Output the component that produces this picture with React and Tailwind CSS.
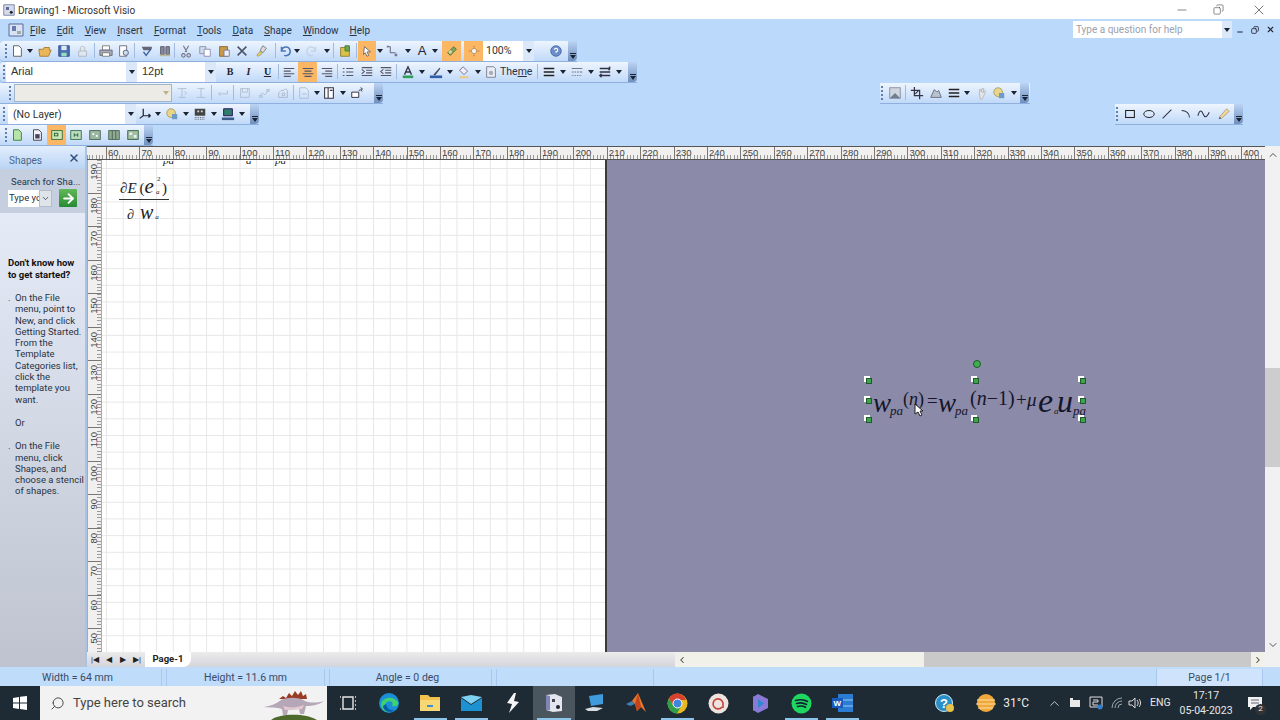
import { X, Search, ChevronUp, ChevronDown, ChevronLeft, ChevronRight, ArrowRight, Minus, Copy } from "lucide-react"

const ICONS = {
  new: <path d="M4 2h6l3 3v9H4z" fill="#fff" stroke="#555" />,
  open: <path d="M1 6h5l1-2h6v3h2l-3 7H2z" fill="#e9b65a" stroke="#a9772c" />,
  save: <><path d="M2 2h12v12H2z" fill="#4a6fb5" stroke="#2b4a88" /><path d="M5 2h6v5H5z" fill="#dfe8f5" /><path d="M5 10h6v4H5z" fill="#9db" /></>,
  perm: <path d="M3 8h9v6H3zM5 8V4a3 3 0 0 1 5 0v4" fill="#e8e8e8" stroke="#999" />,
  print: <><path d="M4 2h8v5H4z" fill="#fff" stroke="#777" /><path d="M1 7h14v6H1z" fill="#aab" stroke="#667" /><path d="M4 10h8v4H4z" fill="#fff" stroke="#777" /></>,
  preview: <><path d="M3 2h8v12H3z" fill="#fff" stroke="#667" /><circle cx="10" cy="10" r="3" fill="#cde" stroke="#557" /></>,
  spell: <><path d="M2 3h12l-2 4H4z" fill="#667" /><path d="M4 9l3 4 6-8" fill="none" stroke="#3a5f9c" strokeWidth="1.6" /></>,
  research: <><path d="M3 3h4v9H3zM9 3h4v9H9z" fill="#889" stroke="#556" /><path d="M2 12h12v2H2z" fill="#bb9" /></>,
  cut: <path d="M5 2l4 7M11 2L7 9M5 11a2 2 0 1 0 .1 0zM11 11a2 2 0 1 0 .1 0z" fill="none" stroke="#778" strokeWidth="1.3" />,
  copy: <><path d="M2 3h7v8H2z" fill="#cde" stroke="#88a" /><path d="M7 6h7v8H7z" fill="#fff" stroke="#88a" /></>,
  paste: <><path d="M3 3h9v11H3z" fill="#c99a4a" stroke="#86622a" /><path d="M8 7h6v7H8z" fill="#eef" stroke="#778" /></>,
  del: <path d="M3 3l10 10M13 3L3 13" stroke="#4a5568" strokeWidth="1.8" />,
  paint: <><path d="M9 2l4 3-4 5-3-3z" fill="#dcdcdc" stroke="#777" /><path d="M6 8l2 3-4 3-2-1z" fill="#e8cf4a" stroke="#a98" /></>,
  undo: <path d="M4 3v5h5M4 8a5 5 0 1 1 3 5" fill="none" stroke="#4b76b5" strokeWidth="1.8" />,
  redo: <path d="M12 3v5H7M12 8a5 5 0 1 0-3 5" fill="none" stroke="#b9c6d6" strokeWidth="1.6" />,
  shapes: <><path d="M3 4h10v10H3z" fill="#d9c24a" stroke="#8a7a2a" /><path d="M8 2h5v6H8z" fill="#6aa84f" stroke="#47763a" /></>,
  pointer: <path d="M5 3l7 6H8l2 4-2 1-2-4-2 2z" fill="#fff" stroke="#666" />,
  conn: <><path d="M3 3h3v7h6" fill="none" stroke="#556" /><rect x="2" y="2" width="2" height="2" fill="#779" /><rect x="11" y="11" width="3" height="3" fill="#779" /></>,
  hl: <><path d="M3 10l7-7 3 3-7 7z" fill="#7fa55a" stroke="#4e6d38" /><circle cx="6" cy="9" r="2" fill="#d8d89a" /></>,
  gear: <><circle cx="8" cy="8" r="3" fill="#f4f4f4" stroke="#b98b5a" /><path d="M8 2v2M8 12v2M2 8h2M12 8h2" stroke="#a5754a" /></>,
  help: <><circle cx="8" cy="8" r="6" fill="#6d8fc9" stroke="#4566a6" /><path d="M6 6.5a2 2 0 1 1 2 2.5v1" fill="none" stroke="#fff" strokeWidth="1.3" /></>,
  alignL: <path d="M2 4h12M2 7h8M2 10h12M2 13h8" stroke="#556" strokeWidth="1.4" />,
  alignC: <path d="M2 4h12M4 7h8M2 10h12M4 13h8" stroke="#556" strokeWidth="1.4" />,
  alignR: <path d="M2 4h12M6 7h8M2 10h12M6 13h8" stroke="#556" strokeWidth="1.4" />,
  list: <path d="M2 4h2M6 4h8M2 8h2M6 8h8M2 12h2M6 12h8" stroke="#556" strokeWidth="1.3" />,
  indent: <path d="M2 3h12M7 6h7M7 9h7M2 12h12M2 5l3 2.5L2 10" fill="none" stroke="#556" strokeWidth="1.2" />,
  outdent: <path d="M2 3h12M7 6h7M7 9h7M2 12h12M5 5L2 7.5 5 10" fill="none" stroke="#556" strokeWidth="1.2" />,
  fontColor: <><path d="M4 11l4-9 4 9M6 8h4" fill="none" stroke="#334" strokeWidth="1.5" /><path d="M2 12h12v3H2z" fill="#2f9e57" /></>,
  lineColor: <><path d="M5 11l7-8 1 1-6 8z" fill="#445" /><path d="M1 12h14v3H1z" fill="#2f5ea8" /></>,
  fill: <><path d="M7 2l5 5-4 4-5-5z" fill="#eef" stroke="#667" /><path d="M3 13h10v2H3z" fill="#f2c46d" /></>,
  theme: <><path d="M3 2h8l2 2v10H3z" fill="#e9eef7" stroke="#778" /><circle cx="8" cy="9" r="2.5" fill="#aab" /></>,
  lines: <path d="M2 4h12M2 8h12M2 12h12" stroke="#222" strokeWidth="1.8" />,
  dash: <path d="M2 4h12M2 8h2M5 8h2M8 8h2M11 8h3M2 12h1M4 12h1M6 12h1M8 12h1M10 12h1M12 12h1" stroke="#667" />,
  arrows: <path d="M2 4h10l2-2M14 4l-2 2M2 8h12M2 12h12M4 10l-2 2 2 2" fill="none" stroke="#334" strokeWidth="1.5" />,
  t1: <path d="M3 3h10M8 3v10M4 13h8M11 6l2 2-2 2" fill="none" stroke="#aebccd" />,
  t2: <path d="M3 13h10M8 3v10M4 3h8" fill="none" stroke="#aebccd" />,
  ret: <path d="M13 5v4H3M3 9l2-2M3 9l2 2" fill="none" stroke="#aebccd" />,
  disk: <path d="M3 3h10v10H3zM5 3v4h6V3" fill="none" stroke="#aebccd" />,
  link: <path d="M3 11l3-3 3 2 4-5M3 11h3v2H3zM11 4h3v2h-3z" fill="none" stroke="#aebccd" />,
  grp: <path d="M3 13V8l3-3h3l2-2 2 2v8zM7 8h3v3H7z" fill="none" stroke="#a9b5c5" />,
  page: <path d="M3 2h7l3 3v9H3zM6 9h5" fill="none" stroke="#aebccd" />,
  book: <path d="M3 2h10v12H3zM7 2v12M9 5h3" fill="#fff" stroke="#334" strokeWidth="1.2" />,
  rot: <path d="M2 7h8v6H2zM10 5a3 3 0 0 1 4 1M12 2l2 1-1 2" fill="#fff" stroke="#334" strokeWidth="1.1" />,
  route: <path d="M6 2v8l-4 3M6 10h8M12 8l2 2-2 2" fill="none" stroke="#223" strokeWidth="1.4" />,
  ball: <><circle cx="7" cy="7" r="5" fill="#e6d58a" stroke="#a99b55" /><path d="M8 8h6v6H8z" fill="#6d9bc8" /></>,
  pattern: <><path d="M2 2h12v8H2z" fill="#444" /><path d="M2 12h12M2 14h12" stroke="#556" strokeDasharray="1 1" /><path d="M5 4h2v2H5zM9 4h2v2H9z" fill="#ddd" /></>,
  shadow: <><path d="M3 2h10v8H3z" fill="#2f7d6b" stroke="#205" /><path d="M1 12h14v3H1z" fill="#3b5b8a" /></>,
  gNew: <path d="M4 2h6l3 3v9H4z" fill="#b7e4a8" stroke="#2f7d3a" />,
  gBack: <><path d="M4 2h6l3 3v9H4z" fill="#f2f2f2" stroke="#334" /><rect x="6" y="7" width="5" height="5" fill="#446" /></>,
  gA: <><rect x="2" y="3" width="12" height="10" fill="#cfe8b8" stroke="#2d6a3a" /><rect x="5" y="6" width="4" height="3" fill="none" stroke="#1e5a2a" /></>,
  gB: <><rect x="2" y="3" width="12" height="10" fill="#bcdcbc" stroke="#2d6a4a" /><path d="M6 6v4M10 6v4M6 8h4" stroke="#1e5a3a" /></>,
  gC: <><rect x="2" y="3" width="12" height="10" fill="#9db8a0" stroke="#3f5f50" /><path d="M5 6h2v2H5zM9 8h2v2H9z" fill="#fff" /></>,
  gD: <><rect x="2" y="3" width="12" height="10" fill="#94ab90" stroke="#3f5f50" /><path d="M6 3v10M10 3v10" stroke="#3f5f50" /></>,
  gE: <><rect x="2" y="3" width="12" height="10" fill="#a2c0a0" stroke="#2f5f40" /><path d="M4 5h3v3H4zM9 8h3v3H9z" fill="#eef" /></>,
  picture: <><rect x="2" y="2" width="12" height="12" fill="#cfd6de" stroke="#889" /><path d="M2 14l6-6 6 6z" fill="#6f7f90" /></>,
  crop: <path d="M5 1v10h10M1 5h10v10M6 9l4-4" fill="none" stroke="#334" strokeWidth="1.4" />,
  contrast: <path d="M2 13l4-9 3 3 2-2 3 8z" fill="#b7c4cf" stroke="#667" />,
  hand: <path d="M5 8V4h2v3l1-4h2l-1 5 2-3 1 1-2 5-2 4H6z" fill="#e6e6e6" stroke="#b2b6bb" />,
  rect: <rect x="3" y="4" width="10" height="8" fill="none" stroke="#222" strokeWidth="1.2" />,
  oval: <ellipse cx="8" cy="8" rx="6" ry="4" fill="none" stroke="#222" strokeWidth="1.1" />,
  line: <path d="M3 13L13 3" stroke="#334" strokeWidth="1.2" />,
  arc: <path d="M3 4c5 0 9 3 9 8" fill="none" stroke="#334" strokeWidth="1.2" />,
  wave: <path d="M1 10c2-7 4-7 6-2s4 4 7-2" fill="none" stroke="#334" strokeWidth="1.2" />,
  pencil: <><path d="M3 11l8-9 3 3-9 8z" fill="#efd98a" stroke="#a99" /><path d="M3 11l-1 3 3-1z" fill="#556" /></>,
}

function Drop({ w = "w-[10px]" }) {
  return (
    <div className={`flex h-full shrink-0 items-center justify-center ${w}`}>
      <div className="h-0 w-0 border-x-[3.5px] border-t-[4px] border-x-transparent border-t-[#1b2433]" />
    </div>
  )
}

function Sep() {
  return <div className="mx-[1px] h-[15px] w-px shrink-0 bg-[#9fbbe0]" />
}

function Ic({ name, w = "w-[19px]", on, off, className = "" }) {
  return (
    <div className={`flex h-full shrink-0 items-center justify-center ${w} ${on ? "bg-[#fbb764]" : ""} ${off ? "opacity-60" : ""} ${className}`}>
      <svg width="14" height="14" viewBox="0 0 16 16">{ICONS[name]}</svg>
    </div>
  )
}

function Grip({ className = "" }) {
  return <div className={`h-[14px] w-[2px] shrink-0 border-l-2 border-dotted border-[#5f7fad] ${className}`} />
}

function EndHandle() {
  return (
    <div className="flex h-full w-[9px] shrink-0 flex-col items-center justify-end gap-[1px] rounded-br-sm bg-gradient-to-b from-[#bcd4f4] to-[#6f8fbd] pb-[2px]">
      <div className="h-px w-[6px] bg-[#1b2433]" />
      <div className="h-0 w-0 border-x-[3.5px] border-t-[4px] border-x-transparent border-t-[#1b2433]" />
    </div>
  )
}

function Bar({ className = "", children }) {
  return (
    <div className={`flex h-[20px] shrink-0 items-center bg-gradient-to-b from-[#eef5fe] to-[#c0d9f9] shadow-[0_1px_0_#8fb0dc] ${className}`}>
      {children}
    </div>
  )
}

function Combo({ text, w, drop = "w-[11px]", className = "" }) {
  return (
    <>
      <div className={`flex h-full shrink-0 items-center bg-white text-[10.5px] text-[#333] ${w} ${className}`}>{text}</div>
      <div className="h-full shrink-0 bg-[#dbe8fa]"><Drop w={drop} /></div>
    </>
  )
}

const MENUS = ["File", "Edit", "View", "Insert", "Format", "Tools", "Data", "Shape", "Window", "Help"]
const SIDE_1 = ["On the File", "menu, point to", "New, and click", "Getting Started.", "From the", "Template", "Categories list,", "click the", "template you", "want."]
const SIDE_2 = ["On the File", "menu, click", "Shapes, and", "choose a stencil", "of shapes."]
const H_RULER = Array.from({ length: 35 }, (_, i) => 60 + i * 10)
const V_RULER = Array.from({ length: 15 }, (_, i) => 190 - i * 10)

function Handle({ className }) {
  return (
    <div className={`absolute h-[6px] w-[6px] border border-[#1e5a2a] bg-[#3fa34d] shadow-[-2px_-2px_0_#fff] ${className}`} />
  )
}

function Formula() {
  return (
    <div className="absolute left-[873px] top-[375px] flex h-[40px] items-baseline whitespace-nowrap font-['Liberation_Serif',serif] text-[#15152b]">
      <i className="w-[17px] text-[27px] leading-[40px]">w</i>
      <i className="w-[12px] translate-y-[3px] text-[13px]">pa</i>
      <span className="ml-[1px] w-[24px] -translate-y-[7px] text-[18px]">(<i>n</i>)</span>
      <span className="w-[11px] -translate-y-[5px] text-[19px]">=</span>
      <i className="w-[17px] text-[27px]">w</i>
      <i className="w-[13px] translate-y-[3px] text-[13px]">pa</i>
      <span className="ml-[2px] w-[46px] -translate-y-[7px] text-[20px]">(<i>n</i>−1)</span>
      <span className="w-[11px] -translate-y-[6px] text-[19px]">+</span>
      <i className="w-[11px] -translate-y-[6px] text-[19px]">μ</i>
      <i className="w-[16px] text-[34px]">e</i>
      <i className="w-[3px] translate-y-[2px] text-[9px]">a</i>
      <i className="w-[16px] text-[32px]">u</i>
      <i className="translate-y-[3px] text-[13px]">pa</i>
    </div>
  )
}

function Stego() {
  return (
    <svg width="62" height="34" viewBox="0 0 62 34">
      <path d="M8 34c6-6 34-8 46 0z" fill="#4d6a2c" />
      <path d="M16 13l4-3 3 2 3-5 3 3 3-5 3 4 3-4 2 5 3-2 1 5z" fill="#9a3b25" />
      <path d="M1 21c6-1 12-3 17-7 7-3 18-3 24 1 5 2 12 2 19 0-5 4-12 5-18 5l-2 8h-4l-1-5-11 1-1 5h-4l-1-6c-5-2-12-1-18-2z" fill="#b5a6b8" />
      <path d="M20 20c6 2 14 2 21-1l-2 4-17 1z" fill="#e4c9cf" />
    </svg>
  )
}

const UNDERLINED = [2, 3, 5, 8, 11, 12]

function TaskIcon({ i }) {
  const art = [
    <svg key="0" width="18" height="18" viewBox="0 0 18 18"><path d="M4 3h10v12H4zM1 3h1M1 15h1M16 3h1M16 7h1M16 11h1M16 15h1" fill="none" stroke="#e7e7e7" strokeWidth="1.4" /></svg>,
    <svg key="1" width="22" height="22" viewBox="0 0 22 22"><circle cx="11" cy="11" r="10" fill="#1a8fd8" /><path d="M3 12C4 5 15 3 20 10c1 4-3 5-6 4 2-3-1-6-5-4-3 2-3 7 1 10-4 0-7-4-7-8z" fill="#3fd06f" /><path d="M5 14c0 5 7 8 12 4-5 1-8-1-9-6z" fill="#0b5ca8" /></svg>,
    <svg key="2" width="22" height="20" viewBox="0 0 22 20"><path d="M1 2h8l2 2h10v14H1z" fill="#f2c14e" /><path d="M1 7h20v11H1z" fill="#f8d775" /><path d="M8 12h6v2H8z" fill="#3a8fd1" /></svg>,
    <svg key="3" width="21" height="16" viewBox="0 0 21 16"><path d="M0 3l10 7 11-7v13H0z" fill="#1c92d2" /><path d="M0 2l10-2 11 2-11 7z" fill="#7fd0f2" /></svg>,
    <svg key="4" width="12" height="20" viewBox="0 0 12 20"><path d="M7 0L0 10l5 1-3 9 10-11-5-1 2-8z" fill="#f5f5f5" /></svg>,
    <svg key="5" width="21" height="20" viewBox="0 0 21 20"><path d="M3 2l9-1 7 3v14l-9 1-7-2z" fill="#e4e6ef" /><path d="M3 2l4 1v14l-4 0z" fill="#7d86b5" /><circle cx="15" cy="14" r="2" fill="#223" /><path d="M9 6h3v3H9z" fill="#445" /></svg>,
    <svg key="6" width="20" height="20" viewBox="0 0 20 20"><path d="M4 3l14-2v10L6 13z" fill="#3f9bdc" /><path d="M0 16l8-2 10 1-6 3H3z" fill="#d7dde2" /></svg>,
    <svg key="7" width="20" height="20" viewBox="0 0 20 20"><path d="M0 11l6-3 3 3-5 2z" fill="#3c7fb5" /><path d="M6 8l6-8 8 19-5-5-4 4-2-7z" fill="#e6782c" /><path d="M12 0l-3 11 2 7 4-4z" fill="#c4451d" /></svg>,
    <svg key="8" width="21" height="21" viewBox="0 0 21 21"><circle cx="10.5" cy="10.5" r="10" fill="#e8b923" /><path d="M10.5.5A10 10 0 0 0 2 5.5l5 8.5 3.500-7H19A10 10 0 0 0 10.500.5z" fill="#d9412f" /><path d="M2 5.500A10 10 0 0 0 10 20.500l4-7-7 .5z" fill="#2fa04a" /><circle cx="10.5" cy="10.5" r="4.500" fill="#3f86e0" stroke="#fff" /></svg>,
    <svg key="9" width="21" height="21" viewBox="0 0 21 21"><circle cx="10.5" cy="10.5" r="10" fill="#efe3df" /><path d="M14 14a5 5 0 1 1 1-4v5" fill="none" stroke="#c4453d" strokeWidth="1.6" /></svg>,
    <svg key="10" width="21" height="21" viewBox="0 0 21 21"><path d="M3 3l15 7.500L3 18z" fill="#4d5bb0" /><path d="M8 1l10 5v9l-10 5-5-3V4z" fill="#8a79d6" /><path d="M8 6l6 4.500-6 4.500z" fill="#2b8ad1" /></svg>,
    <svg key="11" width="21" height="21" viewBox="0 0 21 21"><circle cx="10.5" cy="10.5" r="10" fill="#1ed760" /><path d="M4.500 7.500c4-1 9-1 12 1M5.500 10.500c3.500-1 7.500-.5 10 1M6.500 13.500c3-.8 6-.4 8 .8" fill="none" stroke="#123" strokeWidth="1.600" strokeLinecap="round" /></svg>,
    <svg key="12" width="22" height="20" viewBox="0 0 22 20"><path d="M6 1h15v18H6z" fill="#2b7cd3" /><path d="M6 7h15M6 13h15" stroke="#9cc7f2" /><path d="M0 5h11v10H0z" fill="#185abd" /><text x="1.500" y="13" fontSize="8" fontWeight="700" fill="#fff" fontFamily="Liberation Sans">W</text></svg>,
  ]
  return (
    <div className={`relative flex h-full w-[41.25px] shrink-0 items-center justify-center ${i === 5 ? "bg-[#4a555e]" : ""}`}>
      {art[i]}
      {UNDERLINED.includes(i) && <div className="absolute bottom-0 left-[4px] right-[4px] h-[2px] bg-[#8cc4ea]" />}
    </div>
  )
}

export default function App() {
  return (
    <div className="flex h-[720px] w-[1280px] flex-col overflow-hidden bg-[#bad9fb] font-['Roboto',sans-serif] text-[#2a3342]">
      {/* Title bar */}
      <div className="flex h-[19px] shrink-0 items-center bg-white pl-[3px] text-[#333]">
        <svg width="12" height="12" viewBox="0 0 16 16"><path d="M1 1h14v14H1z" fill="#d8dce8" stroke="#5a6a98" /><path d="M4 4h4v4H4z" fill="#5a6a98" /><circle cx="11" cy="11" r="2" fill="#223" /></svg>
        <div className="ml-[3px] pt-[1px] text-[10px]">Drawing1 - Microsoft Visio</div>
        <div className="ml-auto flex items-center">
          <Minus size={14} strokeWidth={1} className="mr-[24px]" />
          <Copy size={11} strokeWidth={1.2} className="mr-[27px] -scale-x-100" />
          <X size={16} strokeWidth={1} className="mr-[13px]" />
        </div>
      </div>

      {/* Menu */}
      <div className="flex h-[21px] shrink-0 items-center pl-[8px]">
        <svg width="16" height="16" viewBox="0 0 16 16"><path d="M1 2h14v12H1z" fill="#d8e2f2" stroke="#5a6a98" /><path d="M4 4h4v5H4z" fill="#6a7ab0" /><path d="M9 9h4v3H9z" fill="#9aa" /></svg>
        <div className="ml-[6px] flex gap-[11px] pt-[2px] text-[10px]">
          {MENUS.map((m) => (
            <span key={m}><span className="underline">{m[0]}</span>{m.slice(1)}</span>
          ))}
        </div>
        <div className="ml-auto flex h-[17px] w-[159px] items-center justify-between bg-white pl-[3px] text-[10px] text-[#9aa2ae]">
          Type a question for help
          <div className="h-full bg-[#dbe8fa]"><Drop /></div>
        </div>
        <div className="flex w-[48px] items-center text-[#223]">
          <Minus size={8} strokeWidth={3} className="ml-[4px] translate-y-[2px]" />
          <Copy size={8} strokeWidth={2.5} className="ml-[7px] -scale-x-100" />
          <X size={9} strokeWidth={3} className="ml-[7px]" />
        </div>
      </div>

      {/* Standard */}
      <div className="flex h-[21px] shrink-0 items-center">
        <Bar className="w-[577px] rounded-l-sm pl-[5px]">
          <Grip className="mr-[2px]" />
          <Ic name="new" w="w-[16px]" /><Drop />
          <Ic name="open" w="w-[20px]" /><Ic name="save" w="w-[18px]" /><Ic name="perm" w="w-[20px]" off /><Sep />
          <Ic name="print" w="w-[19px]" /><Ic name="preview" w="w-[18px]" /><Sep />
          <Ic name="spell" w="w-[21px]" /><Ic name="research" w="w-[16px]" /><Sep />
          <Ic name="cut" w="w-[19px]" /><Ic name="copy" w="w-[19px]" /><Ic name="paste" w="w-[20px]" /><Ic name="del" w="w-[16px]" />
          <Ic name="paint" w="w-[24px]" /><Sep />
          <Ic name="undo" w="w-[15px]" /><Drop /><Ic name="redo" w="w-[20px]" off /><Drop /><Sep />
          <Ic name="shapes" w="w-[20px]" /><Sep />
          <Ic name="pointer" w="w-[18px]" on /><Drop w="w-[8px]" />
          <Ic name="conn" w="w-[16px]" /><Drop w="w-[16px]" />
          <span className="w-[12px] shrink-0 text-center font-['Liberation_Sans',sans-serif] text-[13px] text-[#223]">A</span>
          <Drop w="w-[14px]" />
          <Ic name="hl" on /><div className="w-[3px] shrink-0" />
          <Ic name="gear" on />
          <Combo text="100%" w="w-[40px]" className="pl-[3px]" />
          <Ic name="help" w="w-[22px]" className="ml-[11px]" />
          <div className="flex-1" />
          <EndHandle />
        </Bar>
      </div>

      {/* Formatting */}
      <div className="flex h-[21px] shrink-0 items-center">
        <Bar className="w-[637px] rounded-l-sm pl-[3px]">
          <Grip className="mr-[1px]" />
          <Combo text="Arial" w="w-[120px]" className="pl-[5px] font-['Liberation_Sans',sans-serif] text-[11px]" />
          <Combo text="12pt" w="w-[68px]" className="pl-[5px] font-['Liberation_Sans',sans-serif] text-[11px]" />
          <div className="w-[5px] shrink-0" />
          <span className="w-[18px] shrink-0 text-center font-['Liberation_Serif',serif] text-[10px] font-bold text-[#223]">B</span>
          <span className="w-[19px] shrink-0 text-center font-['Liberation_Serif',serif] text-[10px] font-bold italic text-[#223]">I</span>
          <span className="w-[19px] shrink-0 text-center font-['Liberation_Serif',serif] text-[10px] font-bold text-[#223] underline">U</span>
          <Sep />
          <Ic name="alignL" w="w-[18px]" /><Ic name="alignC" on /><Ic name="alignR" w="w-[19px]" /><Sep />
          <Ic name="list" w="w-[18px]" /><Ic name="indent" /><Ic name="outdent" /><Sep />
          <Ic name="fontColor" /><Drop /><Ic name="lineColor" w="w-[18px]" /><Drop /><Ic name="fill" w="w-[18px]" /><Drop />
          <Ic name="theme" w="w-[16px]" />
          <span className="mr-[5px] ml-[1px] w-[31px] shrink-0 text-[10.5px]">The<span className="underline">m</span>e</span>
          <Sep />
          <Ic name="lines" /><Drop /><Ic name="dash" w="w-[18px]" /><Drop /><Ic name="arrows" w="w-[18px]" /><Drop />
          <div className="flex-1" />
          <EndHandle />
        </Bar>
      </div>

      {/* Row 3 with floating picture toolbar */}
      <div className="flex h-[21px] shrink-0 items-center">
        <Bar className="w-[383px] pl-[9px]">
          <Grip className="mr-[3px]" />
          <div className="flex h-[18px] w-[158px] shrink-0 items-center justify-end border border-[#a3b5c9] bg-[#ecebe5] pr-[2px]"><div className="h-0 w-0 border-x-[3.5px] border-t-[4px] border-x-transparent border-t-[#bfb08a]" /></div>
          <Ic name="t1" w="w-[19px]" /><Ic name="t2" w="w-[19px]" /><Sep />
          <Ic name="ret" w="w-[19px]" /><Sep />
          <Ic name="disk" /><Ic name="link" /><Ic name="grp" /><Sep />
          <Ic name="page" w="w-[17px]" /><Drop />
          <Ic name="book" w="w-[14px]" /><Drop w="w-[14px]" /><Ic name="rot" w="w-[14px]" />
          <div className="flex-1" />
          <EndHandle />
        </Bar>
        <Bar className="ml-[497px] w-[150px] pl-[1px]">
          <Grip className="mr-[2px]" />
          <Ic name="picture" w="w-[19px]" /><Sep />
          <Ic name="crop" w="w-[19px]" /><Ic name="contrast" /><Ic name="lines" w="w-[17px]" /><Drop />
          <Ic name="hand" w="w-[19px]" /><Ic name="ball" w="w-[16px]" /><Drop w="w-[13px]" />
          <EndHandle />
        </Bar>
      </div>

      {/* Row 4 with floating drawing toolbar */}
      <div className="flex h-[21px] shrink-0 items-end">
        <Bar className="w-[259px] pl-[3px]">
          <Grip className="mr-[3px]" />
          <Combo text="(No Layer)" w="w-[117px]" className="pl-[5px] pt-[1px] text-[10.5px]" />
          <Ic name="route" w="w-[17px]" /><Drop /><Ic name="ball" w="w-[18px]" /><Drop /><Ic name="pattern" w="w-[18px]" /><Drop /><Ic name="shadow" w="w-[18px]" /><Drop />
          <div className="flex-1" />
          <EndHandle />
        </Bar>
        <Bar className="ml-[856px] w-[128px] pl-[1px]">
          <Grip className="mr-[3px]" />
          <Ic name="rect" w="w-[18px]" /><Ic name="oval" w="w-[19px]" /><Ic name="line" w="w-[18px]" /><Ic name="arc" w="w-[19px]" /><Ic name="wave" w="w-[18px]" /><Ic name="pencil" w="w-[21px]" />
          <div className="flex-1" />
          <EndHandle />
        </Bar>
      </div>

      {/* Row 5 */}
      <div className="flex h-[22px] shrink-0 items-start pt-px">
        <Bar className="w-[153px] pl-[5px]">
          <Grip />
          <Ic name="gNew" w="w-[19px]" /><Ic name="gBack" w="w-[21px]" /><Ic name="gA" on /><Ic name="gB" /><Ic name="gC" /><Ic name="gD" /><Ic name="gE" />
          <div className="flex-1" />
          <EndHandle />
        </Bar>
      </div>

      {/* Work area */}
      <div className="flex min-h-0 flex-1">
        {/* Shapes panel */}
        <div className="flex w-[87px] shrink-0 flex-col border-r-2 border-[#a7c3e6] text-[#2a3342]">
          <div className="flex h-[23px] shrink-0 items-center justify-between bg-gradient-to-b from-[#e3eefc] to-[#b9d4f5] pl-[9px] pr-[5px] text-[10px] text-[#48678e]">
            <span className="pt-[5px]">Shapes</span>
            <X size={12} strokeWidth={3} className="mt-[1px] text-[#2f507c]" />
          </div>
          <div className="h-[44px] shrink-0 bg-[#c6cfdf] pl-[8px]">
            <div className="pl-[3px] pt-[6px] text-[9.5px] leading-[13px]">Search for Sha...</div>
            <div className="mt-[1px] flex h-[18px] items-center">
              <div className="flex h-[17px] w-[31px] items-center overflow-hidden whitespace-nowrap bg-white pl-[1px] text-[9.5px]">Type yc</div>
              <div className="flex h-[17px] w-[13px] items-center justify-center border border-[#b5bdca] bg-[#dfe3ea]"><ChevronDown size={9} /></div>
              <div className="ml-[7px] flex h-[18px] w-[18px] items-center justify-center rounded-[1px] bg-gradient-to-b from-[#62b858] to-[#228a34]"><ArrowRight size={15} strokeWidth={3} className="text-white" /></div>
            </div>
          </div>
          <div className="flex min-h-0 flex-1 flex-col bg-gradient-to-b from-[#e4ebf7] to-[#bfc3d0] pl-[8px] text-[9.5px] leading-[11.3px]">
            <div className="mt-[44px] text-[9.5px] font-bold leading-[11.5px] text-[#111]">Don't know how<br />to get started?</div>
            <div className="mt-[12px] flex">
              <span className="w-[7px] shrink-0">.</span>
              <div>{SIDE_1.map((l) => <div key={l} className="whitespace-nowrap">{l}</div>)}</div>
            </div>
            <div className="ml-[7px] mt-[12px]">Or</div>
            <div className="mt-[12px] flex">
              <span className="w-[7px] shrink-0">.</span>
              <div>{SIDE_2.map((l) => <div key={l} className="whitespace-nowrap">{l}</div>)}</div>
            </div>
          </div>
        </div>

        {/* Drawing area */}
        <div className="flex min-w-0 flex-1 flex-col">
          <div className="flex min-h-0 flex-1">
            <div className="flex min-w-0 flex-1 flex-col">
              {/* Horizontal ruler */}
              <div className="relative flex h-[14px] shrink-0 overflow-hidden border-y border-[#555] bg-[#f1f0ee] pl-[19px] font-['Liberation_Sans',sans-serif] text-[9.5px] leading-[12px] text-[#444]">
                <div className="absolute inset-x-0 bottom-0 h-[4px] bg-[repeating-linear-gradient(90deg,#9a9a9a_0,#9a9a9a_1px,transparent_1px,transparent_3.34px)] bg-[position:2px_0]" />
                {H_RULER.map((n) => (
                  <div key={n} className="relative w-[33.4px] shrink-0 border-l border-[#777] pl-[1px]">{n}</div>
                ))}
              </div>
              <div className="flex min-h-0 flex-1">
                {/* Vertical ruler */}
                <div className="relative flex w-[15px] shrink-0 flex-col overflow-hidden border-x border-[#aaa] bg-[#f1f0ee] font-['Liberation_Sans',sans-serif] text-[9.5px] text-[#444]">
                  <div className="absolute inset-y-0 right-0 w-[4px] bg-[repeating-linear-gradient(0deg,#9a9a9a_0,#9a9a9a_1px,transparent_1px,transparent_3.34px)]" />
                  {V_RULER.map((n) => (
                    <div key={n} className="relative flex h-[33.5px] shrink-0 items-start justify-start border-b border-[#777] pt-[4px]">
                      <span className="rotate-180 leading-[12px] [writing-mode:vertical-rl]">{n}</span>
                    </div>
                  ))}
                </div>
                {/* Page */}
                <div className="w-[505px] shrink-0 border-r-2 border-[#3b3b3b] bg-white bg-[linear-gradient(#e7e7e7_1px,transparent_1px),linear-gradient(90deg,#e7e7e7_1px,transparent_1px)] bg-[size:16.7px_16.7px] bg-[position:4px_8px]" />
                <div className="min-w-0 flex-1 bg-[#8b8aa8]" />
              </div>
            </div>
            {/* Vertical scrollbar */}
            <div className="flex w-[15px] shrink-0 flex-col items-center bg-[#f1f1f1] text-[#555]">
              <ChevronUp size={12} className="mt-[3px]" />
              <div className="mt-[207px] h-[99px] w-full bg-[#cdcdcd]" />
              <ChevronDown size={12} className="mt-auto mb-[1px]" />
            </div>
          </div>

          {/* Tabs and horizontal scrollbar */}
          <div className="flex h-[15px] shrink-0 items-center">
            <div className="flex h-full w-[588px] shrink-0 items-center bg-gradient-to-b from-[#ececec] to-[#d4d4dc] pl-[1px] text-[#222]">
              <span className="w-[14px] text-center text-[8px] leading-none">|◀</span>
              <span className="w-[14px] text-center text-[8px] leading-none">◀</span>
              <span className="w-[14px] text-center text-[8px] leading-none">▶</span>
              <span className="w-[14px] text-center text-[8px] leading-none">▶|</span>
              <div className="ml-[1px] flex h-full w-[46px] items-center justify-center rounded-br-lg bg-white text-[9.5px] font-bold">Page-1</div>
            </div>
            <div className="flex h-full flex-1 items-center bg-[#f1f1e9] text-[#444]">
              <ChevronLeft size={10} strokeWidth={2.5} className="ml-[2px]" />
              <div className="ml-[237px] h-full w-[327px] bg-[#c9c9c9]" />
              <ChevronRight size={10} strokeWidth={2.5} className="ml-[2px]" />
            </div>
            <div className="h-full w-[18px] bg-[#f1f1f1]" />
          </div>
        </div>
      </div>

      {/* Status bar */}
      <div className="flex h-[19px] shrink-0 items-center bg-[#bfdcfb] pt-[2px] text-[10.5px] text-[#3a4b66]">
        <div className="flex h-full w-[162px] items-center justify-center border-r border-[#a8c8ee] pr-[6px]">Width = 64 mm</div>
        <div className="ml-[4px] flex h-full w-[159px] items-center justify-center border-x border-[#a8c8ee]">Height = 11.6 mm</div>
        <div className="ml-[4px] flex h-full w-[163px] items-center justify-center border-x border-[#a8c8ee] pr-[6px]">Angle = 0 deg</div>
        <div className="ml-[4px] h-full w-[158px] border-x border-[#a8c8ee]" />
        <div className="ml-[502px] flex h-full w-[107px] items-center justify-center border-x border-[#a8c8ee] bg-[#cfe4fc]">Page 1/1</div>
      </div>

      {/* Taskbar */}
      <div className="flex h-[34px] shrink-0 items-center bg-[#1e2b34] text-[#e8e8e8]">
        <div className="flex h-full w-[40px] shrink-0 items-center justify-center">
          <svg width="14" height="14" viewBox="0 0 14 14"><path d="M0 2l6-1v5.500H0zM7 .8L14 0v6.500H7zM0 7.500h6V13l-6-1zM7 7.500h7V14l-7-1z" fill="#fff" /></svg>
        </div>
        <div className="relative flex h-full w-[287px] shrink-0 items-center overflow-hidden bg-[#f2f2f2] pl-[10px] text-[13px] text-[#444]">
          <Search size={15} className="-scale-x-100" strokeWidth={1.5} />
          <span className="ml-[8px]">Type here to search</span>
          <div className="absolute right-[2px] top-0"><Stego /></div>
        </div>
        {Array.from({ length: 13 }, (_, i) => <TaskIcon key={i} i={i} />)}
        <div className="ml-[72px] flex items-center">
          <svg width="20" height="20" viewBox="0 0 20 20"><circle cx="9" cy="10" r="8.500" fill="#2a8fc9" stroke="#cfe8f5" /><text x="5" y="15" fontSize="13" fontWeight="700" fill="#fff" fontFamily="Liberation Sans">?</text><circle cx="15" cy="15" r="4" fill="#e8c34a" /></svg>
          <svg width="22" height="20" viewBox="0 0 22 20" className="ml-[20px]"><circle cx="11" cy="10" r="9" fill="#f0a83a" /><path d="M2 7h18M1 11h20M3 15h15" stroke="#fbe0a6" strokeWidth="1" /></svg>
          <span className="ml-[6px] text-[12px]">31°C</span>
        </div>
        <div className="ml-[18px] flex items-center">
          <ChevronUp size={15} strokeWidth={1.3} />
          <svg width="14" height="14" viewBox="0 0 14 14" className="ml-[6px]"><path d="M2 4h10v7H2z" fill="#e8e8e8" /><path d="M2 2h3v2H2z" fill="#e8e8e8" /></svg>
          <svg width="16" height="16" viewBox="0 0 16 16" className="ml-[6px]"><path d="M2 2h12v10H2z" fill="none" stroke="#ddd" /><path d="M5 5h5v2H5v3h5" fill="none" stroke="#ddd" /><circle cx="12" cy="12" r="2.500" fill="#2f7fd0" /></svg>
          <svg width="14" height="14" viewBox="0 0 14 14" className="ml-[6px]"><path d="M2 12a10 10 0 0 1 10-10M5 12a7 7 0 0 1 7-7M8 12a4 4 0 0 1 4-4" fill="none" stroke="#9aa" /></svg>
          <svg width="14" height="14" viewBox="0 0 14 14" className="ml-[4px]"><path d="M1 5h3l3-3v10L4 9H1zM9 4c1.500 2 1.500 4 0 6M11 3c2 2 2 6 0 8" fill="none" stroke="#ddd" /></svg>
          <span className="ml-[8px] w-[22px] text-[10.5px]">ENG</span>
          <div className="ml-[4px] w-[60px] whitespace-nowrap text-center text-[10.5px] leading-[15px]">17:17<br />05-04-2023</div>
          <div className="relative ml-[11px]">
            <svg width="16" height="15" viewBox="0 0 16 15"><path d="M1 1h14v10H6l-3 3v-3H1z" fill="#f1f1f1" /><path d="M4 4h8M4 7h8" stroke="#667" /></svg>
            <div className="absolute -bottom-[4px] -right-[3px] flex h-[11px] w-[11px] items-center justify-center rounded-full bg-[#333] text-[8px]">2</div>
          </div>
        </div>
      </div>

      {/* Shapes on the drawing canvas */}
      <div className="absolute left-[103px] top-[161px] h-[6px] w-[200px] overflow-hidden font-['Liberation_Serif',serif] text-[11px] italic leading-none text-[#222]">
        <span className="absolute -top-[6px] left-[60px]">pa</span>
        <span className="absolute -top-[6px] left-[143px]">a</span>
        <span className="absolute -top-[6px] left-[172px]">pa</span>
      </div>
      <div className="absolute left-[119px] top-[176px] flex w-[50px] flex-col whitespace-nowrap font-['Liberation_Serif',serif] text-[#222]">
        <div className="relative flex h-[24px] w-full items-baseline border-b border-[#333] pl-[1px] text-[15px] leading-[20px]">
          ∂<i>E</i><span className="ml-[3px]">(</span><i className="text-[21px]">e</i>
          <span className="absolute left-[38px] top-[-1px] text-[7px] leading-[8px]">2</span>
          <i className="absolute left-[37px] top-[12px] text-[7px] leading-[8px]">a</i>
          <span className="ml-[8px]">)</span>
        </div>
        <div className="flex w-full items-baseline pl-[8px] text-[14px] leading-[24px]">∂<i className="ml-[6px] text-[20px]">w</i><i className="ml-[2px] text-[7px]">a</i></div>
      </div>
      <Formula />
      <Handle className="left-[866px] top-[378px]" />
      <Handle className="left-[973px] top-[378px]" />
      <Handle className="left-[1080px] top-[378px]" />
      <Handle className="left-[866px] top-[398px]" />
      <Handle className="left-[1080px] top-[398px]" />
      <Handle className="left-[866px] top-[417px]" />
      <Handle className="left-[973px] top-[417px]" />
      <Handle className="left-[1080px] top-[417px]" />
      <div className="absolute left-[973px] top-[360px] h-[8px] w-[8px] rounded-full border border-[#1e5a2a] bg-[#3fae4f]" />
      <svg width="10" height="14" viewBox="0 0 10 14" className="absolute left-[914px] top-[403px]"><path d="M1 1v10l3-2 2 4 2-1-2-4h3z" fill="#fff" stroke="#222" /></svg>
    </div>
  )
}
